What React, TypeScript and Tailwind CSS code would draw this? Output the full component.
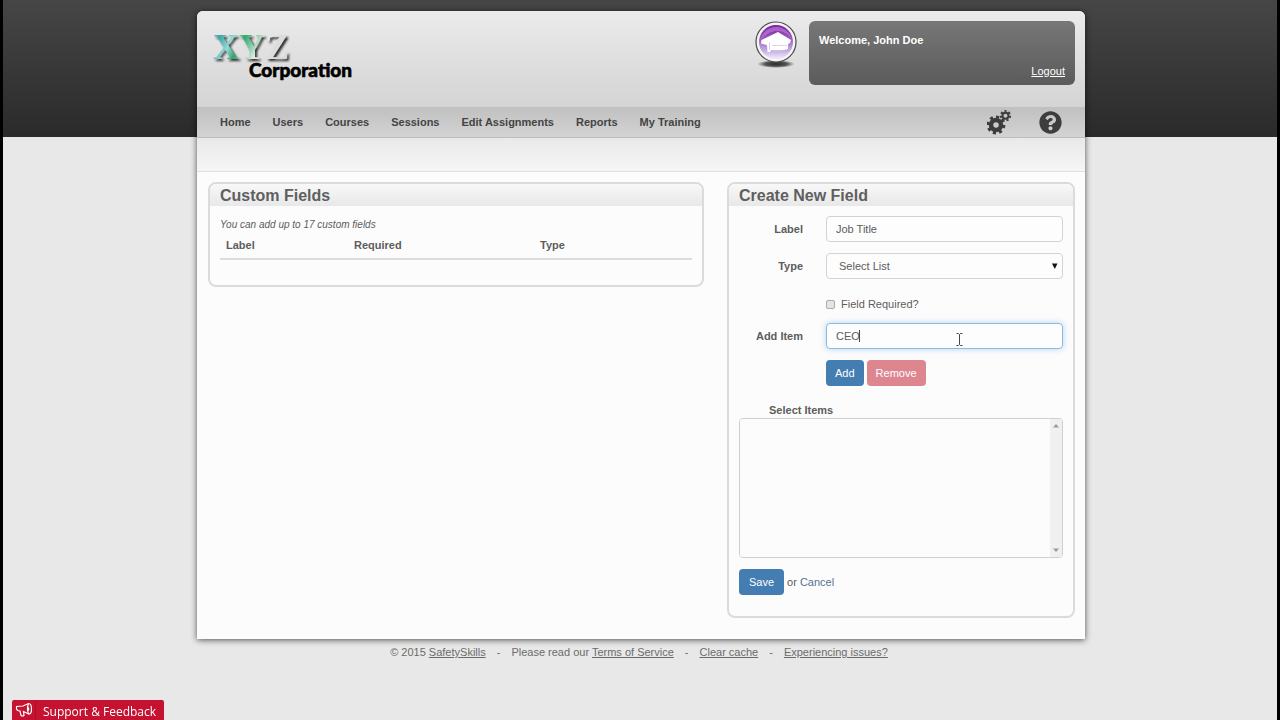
import type { ReactNode } from 'react'
import { FaQuestionCircle } from 'react-icons/fa'

const navItems = [
  'Home',
  'Users',
  'Courses',
  'Sessions',
  'Edit Assignments',
  'Reports',
  'My Training',
]

function Logo() {
  return (
    <svg width="150" height="56" viewBox="0 0 150 56" role="img" aria-label="XYZ Corporation">
      <defs>
        <linearGradient id="xyz" x1="0" x2="1" y1="0" y2="0.3">
          <stop offset="0" stopColor="#7fc4c9" />
          <stop offset="0.15" stopColor="#3fa5a8" />
          <stop offset="0.32" stopColor="#8fdcd6" />
          <stop offset="0.45" stopColor="#2fa66c" />
          <stop offset="0.6" stopColor="#8fd0ae" />
          <stop offset="0.7" stopColor="#e4e8e6" />
          <stop offset="1" stopColor="#d8d8d8" />
        </linearGradient>
        <filter id="xyzShadow" x="-10%" y="-10%" width="125%" height="125%">
          <feDropShadow dx="2" dy="2" stdDeviation="1.2" floodColor="#222" floodOpacity="0.95" />
        </filter>
      </defs>
      <text
        x="4"
        y="34"
        fill="url(#xyz)"
        filter="url(#xyzShadow)"
        className="font-['Liberation_Serif',serif] text-[36px] font-bold"
      >
        XYZ
      </text>
      <text
        x="40"
        y="52"
        fill="#000"
        stroke="#000"
        strokeWidth="0.6"
        className="font-[Lato,sans-serif] text-[19px] font-black"
      >
        Corporation
      </text>
    </svg>
  )
}

function TrainingBadge() {
  return (
    <svg width="46" height="50" viewBox="0 0 46 50" aria-hidden="true">
      <defs>
        <linearGradient id="orb" x1="0" x2="0" y1="0" y2="1">
          <stop offset="0" stopColor="#7a1fa0" />
          <stop offset="0.4" stopColor="#9a5cc0" />
          <stop offset="0.75" stopColor="#c3aee3" />
          <stop offset="1" stopColor="#f1edfa" />
        </linearGradient>
        <radialGradient id="ground">
          <stop offset="0" stopColor="#2a2a2a" />
          <stop offset="0.6" stopColor="#555" />
          <stop offset="1" stopColor="#777" stopOpacity="0" />
        </radialGradient>
      </defs>
      <ellipse cx="23" cy="43" rx="19" ry="4" fill="url(#ground)" />
      <circle cx="23" cy="21" r="20" fill="#f4f4f4" stroke="#4a4a4a" strokeWidth="1.2" />
      <circle cx="23" cy="21" r="17" fill="url(#orb)" />
      <path d="M8 18a15.500 15.500 0 0 1 30-1c-4-5-9-7-14-7s-11 3-16 8z" fill="#b878d4" opacity="0.7" />
      <path d="M25 11 38 19 37 22l-2 1v5q-5 2-17 1l-1 2h-2.500l-.5-7L8 22.500 8.500 19z" fill="#fff" />
      <path d="M16.500 21v8M19 24.500h15" stroke="#d5c4e8" strokeWidth="0.8" fill="none" />
    </svg>
  )
}

// One large gear with a smaller one at its upper right; the dashed rings are the teeth.
function GearsIcon() {
  return (
    <svg width="24" height="26" viewBox="0 0 24 26" fill="none" stroke="currentColor" aria-hidden="true">
      <circle cx="9" cy="16" r="5" strokeWidth="4.500" />
      <circle cx="9" cy="16" r="8" strokeWidth="2.800" pathLength="16" strokeDasharray="1 1" />
      <circle cx="18.500" cy="6.800" r="3" strokeWidth="2" />
      <circle cx="18.500" cy="6.800" r="4.700" strokeWidth="2" pathLength="14" strokeDasharray="1 1" />
    </svg>
  )
}

function Panel({ title, className, children }: { title: string; className?: string; children: ReactNode }) {
  return (
    <section className={`overflow-hidden rounded-lg border-2 border-[#dcdbdc] ${className ?? ''}`}>
      <h2 className="h-[22px] bg-linear-to-b from-[#f8f8f8] to-[#e8e8e8] px-[10px] text-base leading-6 font-bold text-[#5f5f5f]">
        {title}
      </h2>
      {children}
    </section>
  )
}

export default function App() {
  return (
    <div className="min-h-screen border-x-[3px] border-black bg-[#e8e8e8] bg-[linear-gradient(#464646,#2a2a2a)] bg-[length:100%_137px] bg-no-repeat pt-[11px] pl-0.5 font-['Liberation_Sans',Arial,sans-serif] text-[11px] leading-4 text-[#5c5c5c]">
      <div className="mx-auto max-w-[888px] rounded-t-md bg-[#fdfcfd] shadow-[0_1px_6px_rgba(0,0,0,0.65)]">
        <header className="flex h-24 items-start justify-between rounded-t-md bg-linear-to-b from-[#ebebeb] to-[#d4d4d4] pt-[10px] pr-[10px] pl-3">
          <a href="#" className="mt-1">
            <Logo />
          </a>
          <div className="flex items-start gap-[10px]">
            <a href="#" aria-label="My training">
              <TrainingBadge />
            </a>
            <div className="flex h-16 w-[266px] flex-col justify-between rounded-md bg-linear-to-b from-[#777] to-[#5b5b5b] px-[10px] pt-[11px] pb-[6px] text-white">
              <p className="font-bold">Welcome, John Doe</p>
              <a href="#" className="self-end underline">
                Logout
              </a>
            </div>
          </div>
        </header>

        <nav className="flex h-[31px] items-center justify-between border-b border-[#bdbdbd] bg-linear-to-b from-[#c0c0c0] to-[#d3d3d3] pr-[23px] pl-[23px]">
          <ul className="flex gap-[22px] font-bold text-[#444]">
            {navItems.map((item) => (
              <li key={item}>
                <a href="#">{item}</a>
              </li>
            ))}
          </ul>
          <div className="flex items-center gap-7 text-[#3d3d3d]">
            <a href="#" aria-label="Settings">
              <GearsIcon />
            </a>
            <a href="#" aria-label="Help">
              <FaQuestionCircle size={23} />
            </a>
          </div>
        </nav>

        <div className="h-[34px] border-b border-[#e0e0e0] bg-linear-to-b from-[#e9e9e9] to-[#f6f6f6]" />

        <main className="grid grid-cols-[496fr_348fr] items-start gap-[23px] pt-[10px] pr-[10px] pb-[21px] pl-[11px]">
          <Panel title="Custom Fields" className="h-[105px]">
            <div className="px-[10px] pt-[11px]">
              <p className="text-[10px] italic">You can add up to 17 custom fields</p>
              <table className="mt-0.5 w-full table-fixed">
                <thead>
                  <tr className="border-b-2 border-[#dcdcdc] text-left">
                    <th className="w-[128px] px-1.5 pt-0.5 pb-[5px]">Label</th>
                    <th className="w-[186px] px-1.5 pt-0.5 pb-[5px]">Required</th>
                    <th className="px-1.5 pt-0.5 pb-[5px]">Type</th>
                  </tr>
                </thead>
                <tbody />
              </table>
            </div>
          </Panel>

          <Panel title="Create New Field">
            <form className="px-[10px] pt-[10px] pb-[21px]">
              <div className="grid grid-cols-[64px_1fr] items-center gap-x-[23px] gap-y-[11px]">
                <label htmlFor="label" className="text-right font-bold">
                  Label
                </label>
                <input
                  id="label"
                  defaultValue="Job Title"
                  className="h-[26px] w-full rounded-sm border border-[#d3d3d3] bg-[#fdfdfd] px-[9px]"
                />

                <label htmlFor="type" className="text-right font-bold">
                  Type
                </label>
                <div className="relative">
                  <select
                    id="type"
                    className="block h-[26px] w-full appearance-none rounded-sm border border-[#d3d3d3] bg-[#fdfdfd] px-3"
                  >
                    <option>Select List</option>
                  </select>
                  <svg
                    width="6"
                    height="6"
                    viewBox="0 0 6 6"
                    className="pointer-events-none absolute top-[10px] right-[5px]"
                    aria-hidden="true"
                  >
                    <path d="M0 0.500h5.500L2.800 6z" fill="#111" />
                  </svg>
                </div>

                <label className="col-start-2 flex h-[22px] items-center gap-1.5 pt-1.5">
                  <input
                    type="checkbox"
                    className="size-[9px] appearance-none rounded-xs border border-[#ababab] bg-[#e4e4e4]"
                  />
                  Field Required?
                </label>

                <label htmlFor="item" className="text-right font-bold">
                  Add Item
                </label>
                <div className="relative">
                  <input
                    id="item"
                    autoFocus
                    defaultValue="CEO"
                    className="block h-[26px] w-full rounded-sm border border-[#8dbbdd] bg-[#fdfdfd] px-[9px] caret-transparent shadow-[0_0_6px_rgba(102,175,233,0.5)] outline-none"
                  />
                  <span className="pointer-events-none absolute top-[7px] left-[33px] h-3 w-px bg-[#444]" />
                  <svg
                    width="7"
                    height="13"
                    viewBox="0 0 7 13"
                    className="pointer-events-none absolute top-[10px] right-[100px]"
                    aria-hidden="true"
                  >
                    <path
                      d="M0.500 0.500h2l1 1 1-1h2M3.500 1.500v10M0.500 12.500h2l1-1 1 1h2"
                      fill="none"
                      stroke="#444"
                    />
                  </svg>
                </div>

                <div className="col-start-2 flex gap-[3px] text-white">
                  <button type="button" className="h-[26px] rounded-sm bg-[#437db2] px-[9px]">
                    Add
                  </button>
                  <button type="button" className="h-[26px] rounded-sm bg-[#dd868f] px-[9px]">
                    Remove
                  </button>
                </div>
              </div>

              <label htmlFor="items" className="mt-4 ml-[30px] block font-bold">
                Select Items
              </label>
              <div className="flex h-[140px] overflow-hidden rounded-sm border border-[#cfcfcf]">
                <select id="items" multiple className="min-w-0 flex-1 bg-[#fdfcfd] outline-none" />
                <div className="flex w-3 flex-col items-center justify-between bg-[#f0f0f0] py-1">
                  <svg width="6" height="5" viewBox="0 0 6 5" aria-hidden="true">
                    <path d="M0 4.500h6L3 1z" fill="#999" />
                  </svg>
                  <svg width="6" height="5" viewBox="0 0 6 5" aria-hidden="true">
                    <path d="M0 0.500h6L3 4z" fill="#999" />
                  </svg>
                </div>
              </div>

              <div className="mt-[11px] flex items-center gap-[3px]">
                <button type="submit" className="h-[26px] rounded-sm bg-[#437db2] px-[10px] text-white">
                  Save
                </button>
                <span>
                  or{' '}
                  <a href="#" className="text-[#54728f]">
                    Cancel
                  </a>
                </span>
              </div>
            </form>
          </Panel>
        </main>
      </div>

      <footer className="flex justify-center gap-[11px] pt-[5px] pr-1 text-[#6b6b6b]">
        <span>
          © 2015{' '}
          <a href="#" className="underline">
            SafetySkills
          </a>
        </span>
        <span>-</span>
        <span>
          Please read our{' '}
          <a href="#" className="underline">
            Terms of Service
          </a>
        </span>
        <span>-</span>
        <a href="#" className="underline">
          Clear cache
        </a>
        <span>-</span>
        <a href="#" className="underline">
          Experiencing issues?
        </a>
      </footer>

      <button
        type="button"
        className="fixed bottom-0 left-3 flex h-5 items-center rounded-t-xs bg-[#c41230] font-['Open_Sans',sans-serif] text-xs text-white"
      >
        <span className="flex h-full w-6 items-center justify-center border-r border-[#a91029]">
          <svg width="18" height="16" viewBox="0 0 18 16" fill="none" stroke="#fff" strokeWidth="1.2" aria-hidden="true">
            <path d="M1.500 4.500Q1 7 2.500 8.500L5 9l1 4.500q1.500 1 3 0l-.5-4 5 2.500q3 .5 3-5T13.500 1.500L8 4z" />
            <path d="M13.500 1.500q-2 5 0 10.500M13 5.500q1.500 1.500 0 3" />
          </svg>
        </span>
        <span className="pt-1 pr-2 pl-[7px]">Support &amp; Feedback</span>
      </button>
    </div>
  )
}
